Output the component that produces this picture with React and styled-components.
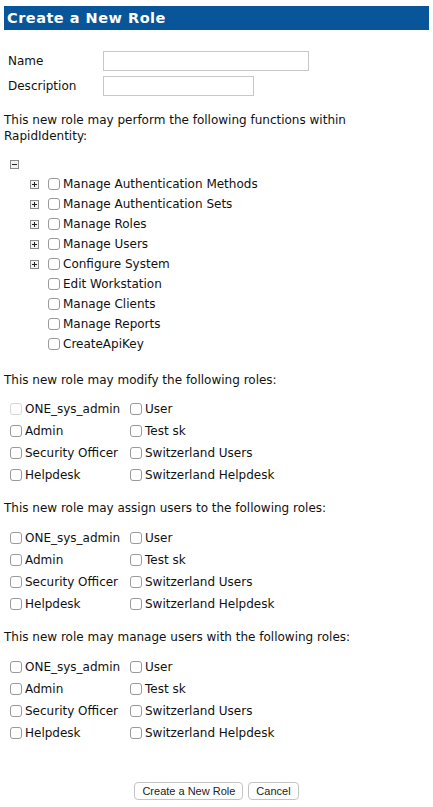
import React from 'react';
import styled, { createGlobalStyle } from 'styled-components';

const GlobalStyle = createGlobalStyle`
  body {
    margin: 0;
    background: #fff;
    font-family: "DejaVu Sans", Verdana, sans-serif;
    font-size: 12px;
    color: #111;
  }
`;

const Page = styled.div`
  width: 433px;
  padding: 6px 4px 0;
  box-sizing: border-box;
`;

const Header = styled.h1`
  margin: 0;
  height: 24px;
  line-height: 24px;
  padding-left: 3px;
  background: #08559a;
  color: #fff;
  font-size: 14.5px;
  letter-spacing: 0.5px;
  font-weight: bold;
`;

const Fields = styled.div`
  display: grid;
  grid-template-columns: 95px auto;
  row-gap: 5px;
  align-items: center;
  margin-top: 21px;
  padding-left: 4px;
`;

const TextInput = styled.input`
  width: ${p => p.$w}px;
  height: 20px;
  box-sizing: border-box;
  border: 1px solid #c8c8c8;
  padding: 0 3px;
  font: inherit;
`;

const Lead = styled.p`
  margin: ${p => p.$mt}px 0 0;
  line-height: 16px;
`;

const Tree = styled.div`
  margin-top: 10px;
`;

const Row = styled.div`
  display: flex;
  align-items: center;
  height: 20px;
  padding-left: ${p => p.$indent}px;
`;

const Expander = styled.span`
  display: inline-flex;
  width: 18px;
  flex: none;
`;

const Box = styled.input.attrs({ type: 'checkbox' })`
  appearance: none;
  margin: 0 3px 0 0;
  width: 12px;
  height: 12px;
  flex: none;
  border: 1px solid ${p => (p.disabled ? '#d6d6d6' : '#9a9a9a')};
  border-radius: 3px;
  background: #fff;
`;

const RoleGrid = styled.div`
  display: grid;
  grid-template-columns: 120px auto;
  grid-auto-rows: 22px;
  align-items: center;
  margin: ${p => p.$mt}px 0 0;
  padding-left: 6px;
`;

const Cell = styled.label`
  display: flex;
  align-items: center;
  white-space: nowrap;
`;

const Actions = styled.div`
  display: flex;
  justify-content: center;
  gap: 5px;
  margin-top: 38px;
`;

const Button = styled.button`
  height: 18px;
  padding: 0 7px;
  background: #fff;
  border: 1px solid #c4c4c4;
  border-radius: 4px;
  font-family: "Liberation Sans", Arial, sans-serif;
  font-size: 11px;
  color: #222;
  line-height: 16px;
`;

function Toggle({ open }) {
  return (
    <svg width="9" height="9" viewBox="0 0 9 9">
      <rect x="0.5" y="0.5" width="8" height="8" fill="#f2f2f2" stroke="#8a8a8a" />
      <path d="M2 4.5h5" stroke="#222" strokeWidth="1" />
      {!open && <path d="M4.5 2v5" stroke="#222" strokeWidth="1" />}
    </svg>
  );
}

const functions = [
  ['Manage Authentication Methods', true],
  ['Manage Authentication Sets', true],
  ['Manage Roles', true],
  ['Manage Users', true],
  ['Configure System', true],
  ['Edit Workstation', false],
  ['Manage Clients', false],
  ['Manage Reports', false],
  ['CreateApiKey', false],
];

const roles = [
  'ONE_sys_admin', 'User',
  'Admin', 'Test sk',
  'Security Officer', 'Switzerland Users',
  'Helpdesk', 'Switzerland Helpdesk',
];

function Roles({ mt, firstDisabled }) {
  return (
    <RoleGrid $mt={mt}>
      {roles.map((r, i) => (
        <Cell key={r}>
          <Box disabled={firstDisabled && i === 0} />
          {r}
        </Cell>
      ))}
    </RoleGrid>
  );
}

export default function App() {
  return (
    <Page>
      <GlobalStyle />
      <Header>Create a New Role</Header>
      <Fields>
        <span>Name</span>
        <TextInput $w={206} />
        <span>Description</span>
        <TextInput $w={151} />
      </Fields>

      <Lead $mt={16}>
        This new role may perform the following functions within RapidIdentity:
      </Lead>
      <Tree>
        <Row $indent={6}>
          <Toggle open />
        </Row>
        {functions.map(([name, sub]) => (
          <Row key={name} $indent={26}>
            <Expander>{sub && <Toggle />}</Expander>
            <Box />
            {name}
          </Row>
        ))}
      </Tree>

      <Lead $mt={18}>This new role may modify the following roles:</Lead>
      <Roles mt={10} firstDisabled />

      <Lead $mt={14}>This new role may assign users to the following roles:</Lead>
      <Roles mt={11} />

      <Lead $mt={14}>This new role may manage users with the following roles:</Lead>
      <Roles mt={11} />

      <Actions>
        <Button>Create a New Role</Button>
        <Button>Cancel</Button>
      </Actions>
    </Page>
  );
}
